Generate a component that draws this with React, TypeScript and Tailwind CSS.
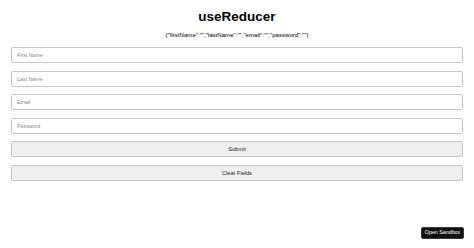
import { useReducer } from 'react';

type State = { firstName: string; lastName: string; email: string; password: string };

const initialState: State = { firstName: '', lastName: '', email: '', password: '' };

function reducer(state: State, action: { type: string; field?: keyof State; value?: string }): State {
  switch (action.type) {
    case 'SET':
      return { ...state, [action.field as string]: action.value };
    case 'CLEAR':
      return initialState;
    default:
      return state;
  }
}

const fields: { name: keyof State; label: string; type: string }[] = [
  { name: 'firstName', label: 'First Name', type: 'text' },
  { name: 'lastName', label: 'Last Name', type: 'text' },
  { name: 'email', label: 'Email', type: 'email' },
  { name: 'password', label: 'Password', type: 'password' },
];

export default function App() {
  const [state, dispatch] = useReducer(reducer, initialState);

  return (
    <div className="relative h-[248px] w-full bg-white font-['Liberation_Sans',Arial,sans-serif] text-black">
      <div className="px-[11px] pt-[9px]">
        <h1 className="text-center text-[13.5px] font-bold leading-[15px]">useReducer</h1>
        <p className="mt-[7px] text-center text-[6.1px] leading-[8px]">{JSON.stringify(state)}</p>

        <form
          onSubmit={(e) => e.preventDefault()}
          className="mt-[8px] flex flex-col gap-[7.6px]"
        >
          {fields.map((f) => (
            <input
              key={f.name}
              type={f.type}
              placeholder={f.label}
              value={state[f.name]}
              onChange={(e) => dispatch({ type: 'SET', field: f.name, value: e.target.value })}
              className="h-[16px] w-full rounded-[1.5px] border border-[#c4c4c4] bg-white px-[5px] text-[5.3px] outline-none placeholder:text-[#8a8a8a]"
            />
          ))}
          <button
            type="submit"
            className="h-[16px] w-full rounded-[1.5px] border border-[#c4c4c4] bg-[#efefef] text-[5.6px] text-[#222]"
          >
            Submit
          </button>
          <button
            type="button"
            onClick={() => dispatch({ type: 'CLEAR' })}
            className="h-[16px] w-full rounded-[1.5px] border border-[#c4c4c4] bg-[#efefef] text-[5.6px] text-[#222]"
          >
            Clear Fields
          </button>
        </form>
      </div>

      <button className="absolute bottom-[9px] right-[10px] h-[12px] w-[43px] rounded-[2px] border border-[#3a3a3a] bg-[#111] text-[5.3px] text-white">
        Open Sandbox
      </button>
    </div>
  );
}
